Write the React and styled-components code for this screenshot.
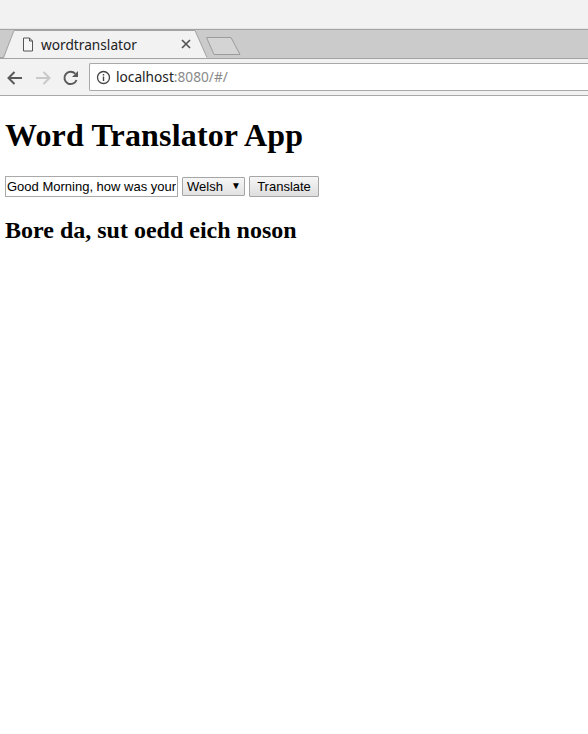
import React from "react";
import styled, { createGlobalStyle } from "styled-components";

const Global = createGlobalStyle`
  html, body { margin: 0; padding: 0; background: #fff; }
  body { width: 588px; height: 734px; overflow: hidden; }
`;
const Chrome = styled.header`
  display: flex; flex-direction: column; height: 96px; width: 588px;
  font-family: "Noto Sans", "Open Sans", sans-serif; overflow: hidden;
`;
const TitleBar = styled.div`height: 28px; background: #f2f2f2; border-bottom: 1px solid #e6e6e6; box-sizing: content-box;`;
const TabStrip = styled.div`
  position: relative; height: 30px; background: #cbcbcb;
  border-top: 1px solid #a3a3a3; border-bottom: 1px solid #a3a3a3; box-sizing: border-box;
`;
const TabShape = styled.svg`position: absolute; left: 0; top: -1px;`;
const TabContent = styled.div`
  position: absolute; left: 22px; top: 0; width: 170px; height: 28px;
  display: flex; align-items: center; gap: 7px;
`;
const TabTitle = styled.span`flex: 1; font-size: 13.7px; color: #222; line-height: 1; padding-top: 1px;`;
const CloseIcon = styled.svg`margin-right: 1px;`;
const Toolbar = styled.div`
  height: 37px; background: #f2f2f2; border-bottom: 1px solid #a8a8a8; box-sizing: border-box;
  display: flex; align-items: center; padding: 0 0 0 5px;
`;
const NavButtons = styled.div`display: flex; gap: 8px; align-items: center; margin-top: 1px;`;
const Omnibox = styled.div`
  flex: 1; margin-left: 8px; height: 28px; background: #fff; border: 1px solid #a9a9a9; border-right: none;
  border-radius: 2px 0 0 2px; box-sizing: border-box; display: flex; align-items: center; padding-left: 6px; gap: 5px;
`;
const Url = styled.span`font-size: 13.7px; color: #222; line-height: 1;`;
const Muted = styled.span`color: #8a8a8a;`;
const Page = styled.main`padding: 0 5px; font-family: "Liberation Serif", serif; color: #000;`;
const Heading = styled.h1`margin: 21px 0 22px; font-size: 32px; font-weight: bold; line-height: 37px; letter-spacing: 0.16px;`;
const Form = styled.form`display: flex; align-items: center; height: 21px;`;
const TextInput = styled.input`
  width: 173px; height: 21px; box-sizing: border-box; padding: 1px; border: 1px solid #a9a9a9;
  font: 13px "Liberation Sans", sans-serif; color: #000; background: #fff; margin: 0 4px 0 0; outline: none;
`;
const Select = styled.div`
  width: 63px; height: 19px; box-sizing: border-box; border: 1px solid #a6a6a6; border-radius: 1px;
  background: linear-gradient(#f6f6f6, #e2e2e2); font: 13px "Liberation Sans", sans-serif;
  display: flex; align-items: center; justify-content: space-between; padding: 0 3px 0 4px; margin-right: 4px;
`;
const Caret = styled.span`font-size: 10px; line-height: 1; margin-top: -2px;`;
const Button = styled.button`
  width: 70px; height: 21px; box-sizing: border-box; border: 1px solid #a6a6a6; border-radius: 1px; padding: 0;
  background: linear-gradient(#f6f6f6, #dedede); font: 13px "Liberation Sans", sans-serif; color: #000;
`;
const Result = styled.h2`margin: 19px 0 0; font-size: 24px; font-weight: bold; line-height: 28px;`;

export default function App() {
  return (
    <>
      <Global />
      <Chrome>
        <TitleBar />
        <TabStrip>
          <TabShape width="250" height="30" viewBox="0 0 250 30">
            <path d="M0 29 L4 29 L14 1.5 L195 1.5 L207 29Z" fill="#f2f2f2" />
            <path d="M0 28.5 L3.5 28.5 L14 1.5 L195 1.5 L207 28.5" fill="none" stroke="#a3a3a3" />
            <path d="M206.5 8.5 L231 8.5 L240 25.5 L214 25.5Z" fill="#d4d4d4" stroke="#9c9c9c" strokeLinejoin="round" />
          </TabShape>
          <TabContent>
            <svg width="12" height="15" viewBox="0 0 12 15"><path d="M1.5 1 H7.5 L10.5 4 V14 H1.5Z M7.5 1 V4 H10.5" fill="#f7f7f7" stroke="#555" strokeWidth="1"/></svg>
            <TabTitle>wordtranslator</TabTitle>
            <CloseIcon width="10" height="10" viewBox="0 0 10 10"><path d="M1 1 L9 9 M9 1 L1 9" stroke="#555" strokeWidth="1.7"/></CloseIcon>
          </TabContent>
        </TabStrip>
        <Toolbar>
          <NavButtons>
            <svg width="20" height="20" viewBox="0 0 20 20"><path d="M17 10 H4 M9.5 4 L3.5 10 L9.5 16" fill="none" stroke="#5a5a5a" strokeWidth="2"/></svg>
            <svg width="20" height="20" viewBox="0 0 20 20"><path d="M3 10 H16 M10.5 4 L16.5 10 L10.5 16" fill="none" stroke="#c8c8c8" strokeWidth="2"/></svg>
            <svg width="20" height="20" viewBox="0 0 20 20"><path d="M15.5 12 A6.2 6.2 0 1 1 14.2 5.6" fill="none" stroke="#5a5a5a" strokeWidth="2"/><path d="M17 3 V9 H11Z" fill="#5a5a5a"/></svg>
          </NavButtons>
          <Omnibox>
            <svg width="15" height="15" viewBox="0 0 15 15"><circle cx="7.5" cy="7.5" r="6" fill="none" stroke="#444" strokeWidth="1.3"/><path d="M7.5 6.5 V11 M7.5 4 V5.4" stroke="#444" strokeWidth="1.4"/></svg>
            <Url>localhost<Muted>:8080/#/</Muted></Url>
          </Omnibox>
        </Toolbar>
      </Chrome>
      <Page>
        <Heading>Word Translator App</Heading>
        <Form onSubmit={(e) => e.preventDefault()}>
          <TextInput defaultValue="Good Morning, how was your night" />
          <Select>Welsh<Caret>▼</Caret></Select>
          <Button type="button">Translate</Button>
        </Form>
        <Result>Bore da, sut oedd eich noson</Result>
      </Page>
    </>
  );
}
